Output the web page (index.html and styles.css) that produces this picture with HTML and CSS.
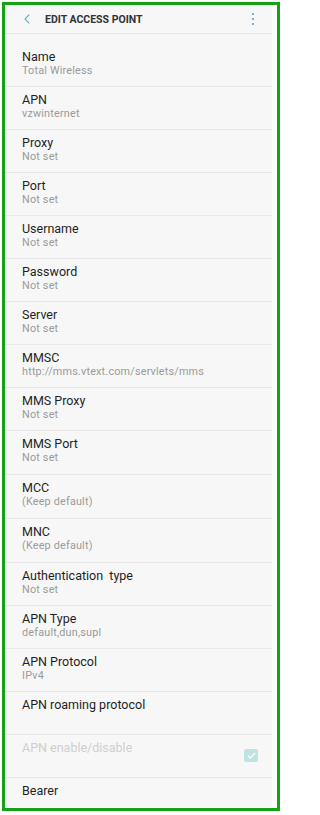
FILE: index.html
```html
<!DOCTYPE html>
<html>
<head>
<meta charset="utf-8">
<link rel="stylesheet" href="styles.css">
</head>
<body>
<div class="frame">
  <div class="screen">
    <div class="header">
      <svg class="back" width="6" height="10" viewBox="0 0 6 10"><path d="M5.2 0.6 L1 5 L5.2 9.4" fill="none" stroke="#5aaed0" stroke-width="1.1"/></svg>
      <div class="h-title">EDIT ACCESS POINT</div>
      <div class="kebab"><span></span><span></span><span></span></div>
    </div>
    <div class="list">
      <div class="row"><div class="t">Name</div><div class="s">Total Wireless</div></div>
      <div class="row"><div class="t">APN</div><div class="s">vzwinternet</div></div>
      <div class="row"><div class="t">Proxy</div><div class="s">Not set</div></div>
      <div class="row"><div class="t">Port</div><div class="s">Not set</div></div>
      <div class="row"><div class="t">Username</div><div class="s">Not set</div></div>
      <div class="row"><div class="t">Password</div><div class="s">Not set</div></div>
      <div class="row"><div class="t">Server</div><div class="s">Not set</div></div>
      <div class="row"><div class="t">MMSC</div><div class="s">http://mms.vtext.com/servlets/mms</div></div>
      <div class="row"><div class="t">MMS Proxy</div><div class="s">Not set</div></div>
      <div class="row tall"><div class="t">MMS Port</div><div class="s">Not set</div></div>
      <div class="row tall"><div class="t">MCC</div><div class="s">(Keep default)</div></div>
      <div class="row tall"><div class="t">MNC</div><div class="s">(Keep default)</div></div>
      <div class="row"><div class="t">Authentication&nbsp; type</div><div class="s">Not set</div></div>
      <div class="row"><div class="t">APN Type</div><div class="s">default,dun,supl</div></div>
      <div class="row"><div class="t">APN Protocol</div><div class="s">IPv4</div></div>
      <div class="row"><div class="t">APN roaming protocol</div></div>
      <div class="row toggle"><div class="t dim">APN enable/disable</div>
        <div class="check"><svg width="9" height="7" viewBox="0 0 9 7"><path d="M0.8 3.6 L3.3 6 L8.2 0.9" fill="none" stroke="#fff" stroke-width="1.3"/></svg></div>
      </div>
      <div class="row"><div class="t">Bearer</div></div>
    </div>
  </div>
</div>
</body>
</html>
```
FILE: styles.css
```css
html, body {
  margin: 0;
  padding: 0;
  background: #fff;
}
body {
  font-family: Roboto, "Noto Sans", sans-serif;
}
.frame {
  margin: 2px 0 0 2px;
  width: 278px;
  height: 809px;
  box-sizing: border-box;
  border: 3px solid #14a314;
  padding-right: 5px;
  background: #fff;
  overflow: hidden;
}
.screen {
  background: #f7f7f7;
  height: 802px;
  overflow: hidden;
}
.header {
  height: 28px;
  border-bottom: 1px solid #e6e6e6;
  display: flex;
  align-items: center;
  padding-left: 19px;
  padding-right: 18px;
}
.back {
  display: block;
}
.h-title {
  margin-left: 15px;
  font-size: 10.5px;
  font-weight: 700;
  color: #333;
  flex: 1;
}
.kebab {
  display: flex;
  flex-direction: column;
  gap: 2.5px;
}
.kebab span {
  width: 2.5px;
  height: 2.5px;
  background: #4b9fca;
  border-radius: 1px;
}
.list {
  padding-top: 10px;
}
.row {
  height: 43px;
  box-sizing: border-box;
  padding: 5px 17px 0 17px;
  border-bottom: 1px solid #e9e9e9;
}
.row.tall {
  height: 44px;
}
.t {
  font-size: 12.5px;
  line-height: 15px;
  color: #1f1f1f;
}
.t.dim {
  color: #cfcfcf;
}
.s {
  font-size: 10.8px;
  line-height: 13px;
  letter-spacing: 0.2px;
  color: #9a9a9a;
}
.toggle {
  display: flex;
  justify-content: space-between;
  align-items: flex-start;
  padding-right: 14px;
}
.check {
  margin-top: 9px;
  width: 14px;
  height: 13px;
  border-radius: 2px;
  background: #bfe2e2;
  display: flex;
  align-items: center;
  justify-content: center;
}
.check svg {
  display: block;
}
```
